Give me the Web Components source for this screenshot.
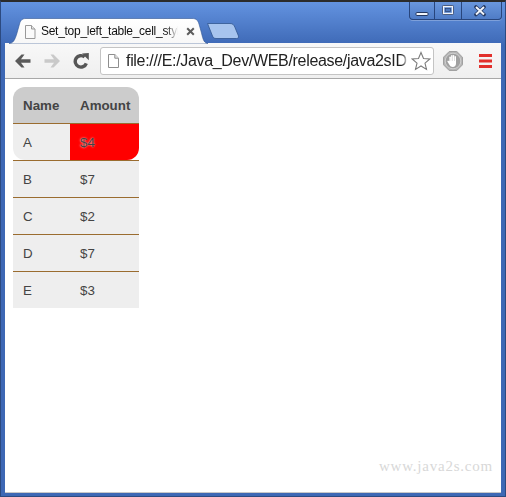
<!DOCTYPE html>
<html>
<head>
<meta charset="utf-8">
<title>Set_top_left_table_cell_style</title>
<style>
  html, body { margin: 0; padding: 0; height: 100%; overflow: hidden; background: #fff; }
  browser-window { height: 497px; }
</style>
</head>
<body>
<browser-window>
  <demo-table></demo-table>
  <site-mark slot="mark">www.java2s.com</site-mark>
</browser-window>

<script>
class WindowControls extends HTMLElement {
  constructor() {
    super();
    this.attachShadow({ mode: 'open' });
  }

  connectedCallback() {
    this.shadowRoot.innerHTML = `
      <style>
        :host {
          position: absolute;
          top: 0;
          right: 3px;
          display: flex;
          width: 93px;
          height: 18px;
          box-sizing: border-box;
          border: 1px solid #28457c;
          border-top: 0;
          border-radius: 0 0 4px 4px;
          background: linear-gradient(#6a97dd, #4f7cc6);
          box-shadow: 0 1px 0 rgba(255,255,255,.25);
        }
        div { display: flex; align-items: center; justify-content: center; border-left: 1px solid #28457c; }
        .min { border-left: 0; width: 24px; }
        .max { width: 26px; }
        .close { flex: 1; padding-right: 4px; }
      </style>
      <div class="min"><svg width="14" height="12" viewBox="0 0 14 12"><rect x="1" y="7.500" width="12" height="3" rx="1" fill="#f2f5fa" stroke="#24375f" stroke-width="1"/></svg></div>
      <div class="max"><svg width="12" height="12" viewBox="0 0 12 12"><rect x=".5" y=".5" width="11" height="9" rx="1" fill="none" stroke="#24375f" stroke-width="1"/><rect x="1.500" y="1.500" width="9" height="7" fill="none" stroke="#f2f5fa" stroke-width="1.400"/><rect x="3.500" y="3.500" width="5" height="3" fill="#4c78c0" stroke="#24375f" stroke-width=".6"/></svg></div>
      <div class="close"><svg width="14" height="12" viewBox="0 0 14 12"><path d="M3 2l8 7.500M11 2l-8 7.500" stroke="#24375f" stroke-width="3.600" stroke-linecap="round"/><path d="M3 2l8 7.500M11 2l-8 7.500" stroke="#f2f5fa" stroke-width="2"/></svg></div>
    `;
  }
}
customElements.define('window-controls', WindowControls);

class BrowserTab extends HTMLElement {
  constructor() {
    super();
    this.attachShadow({ mode: 'open' });
  }

  connectedCallback() {
    this.shadowRoot.innerHTML = `
      <style>
        :host {
          position: relative;
          display: flex;
          align-items: center;
          box-sizing: border-box;
          width: 199px;
          height: 25px;
          padding: 0 12px 0 32px;
          font: 12px "Liberation Sans", Arial, sans-serif;
          letter-spacing: -.28px;
          color: #111;
        }
        .shape { position: absolute; left: 0; top: 0; }
        .page { position: absolute; left: 15px; top: 7px; }
        .title { position: relative; width: 137px; white-space: nowrap; line-height: 16px;
          -webkit-mask-image: linear-gradient(90deg, #000 125px, transparent 137px);
          mask-image: linear-gradient(90deg, #000 125px, transparent 137px); }
        .close { position: absolute; left: 177px; top: 9px; }
      </style>
      <svg class="shape" width="199" height="26" viewBox="0 0 199 26">
        <path d="M0 25.500C4 25.500 6 22 8 15L10.500 6C11.600 2 13.500 .5 17 .5H183C187 .5 188.800 2 190 6L192.500 15C194 22 195.500 25.500 199 25.500V26H0Z" fill="url(#tabfill)" stroke="#2f5492" stroke-width=".6"/>
        <defs><linearGradient id="tabfill" x1="0" y1="0" x2="0" y2="1"><stop offset="0" stop-color="#fff"/><stop offset="1" stop-color="#f7f7f7"/></linearGradient></defs>
      </svg>
      <svg class="page" width="12" height="14" viewBox="0 0 12 14"><path d="M1.500 .5H7.500L11 4V13.500H1.500Z" fill="#fafafa" stroke="#999"/><path d="M7.500 .5V4H11" fill="#e4e4e4" stroke="#999"/></svg>
      <span class="title"><slot></slot></span>
      <svg class="close" width="9" height="9" viewBox="0 0 9 9"><path d="M1.200 1.200l6.600 6.600M7.800 1.200l-6.600 6.600" stroke="#5c5c5c" stroke-width="2"/></svg>
    `;
  }
}
customElements.define('browser-tab', BrowserTab);

class NewTabButton extends HTMLElement {
  constructor() {
    super();
    this.attachShadow({ mode: 'open' });
  }

  connectedCallback() {
    this.shadowRoot.innerHTML = `
      <style>:host { display: block; width: 34px; height: 16px; margin: 5px 0 0 -1px; } svg { display: block; }</style>
      <svg width="34" height="16" viewBox="0 0 34 16"><path d="M.5 .5H23C26 .5 27 2 28 4.500L31.500 13C32 14.500 31 15.500 29.500 15.500H9C7 15.500 6 14.500 5.500 13L1.500 3C1 1.500 .5 .5 .5 .5Z" fill="#a7c4ee" stroke="#30558f" stroke-width=".8"/></svg>
    `;
  }
}
customElements.define('new-tab-button', NewTabButton);

class BrowserToolbar extends HTMLElement {
  constructor() {
    super();
    this.attachShadow({ mode: 'open' });
  }

  connectedCallback() {
    this.shadowRoot.innerHTML = `
      <style>
        :host {
          display: flex;
          align-items: center;
          box-sizing: border-box;
          height: 36px;
          padding: 0 0 0 10px;
          background: linear-gradient(#f8f8f8, #efefef);
          border-bottom: 1px solid #a8a8a8;
          font: 16px "Liberation Sans", Arial, sans-serif;
          color: #222;
        }
        svg { display: block; flex: none; }
        .back { margin-right: 13px; }
        .fwd { margin-right: 13px; }
        .reload { margin-right: 11px; }
        .box {
          display: flex;
          align-items: center;
          box-sizing: border-box;
          width: 334px;
          height: 28px;
          padding: 0 3px 0 7px;
          background: #fff;
          border: 1px solid #c4c4c4;
          border-radius: 3px;
          flex: none;
        }
        .url {
          flex: none;
          width: 282px;
          margin-left: 7px;
          margin-right: 3px;
          white-space: nowrap;
          line-height: 20px;
          letter-spacing: -.32px;
          -webkit-mask-image: linear-gradient(90deg, #000 276px, transparent 282px);
          mask-image: linear-gradient(90deg, #000 276px, transparent 282px);
        }
        .stop { margin-left: 9px; }
        .menu { margin-left: 16px; }
      </style>
      <svg class="back" width="16" height="14" viewBox="0 0 16 14"><path d="M0 7L6.500 .5H9.500L6 5.300H15.500V8.700H6L9.500 13.500H6.500Z" fill="#5a5a5a"/></svg>
      <svg class="fwd" width="16" height="14" viewBox="0 0 16 14"><path d="M16 7L9.500 .5H6.500L10 5.300H.5V8.700H10L6.500 13.500H9.500Z" fill="#c9c9c9"/></svg>
      <svg class="reload" width="16" height="16" viewBox="0 0 16 16"><path d="M13.300 10.300A5.700 5.700 0 1 1 11.600 4" fill="none" stroke="#565656" stroke-width="3.400"/><path d="M9 .5L15.800 0V7.200Z" fill="#565656"/></svg>
      <div class="box">
        <svg width="11" height="14" viewBox="0 0 11 14"><path d="M.5 .5H6.800L10.500 4.200V13.500H.5Z" fill="#fff" stroke="#8e8e8e"/><path d="M6.800 .5V4.200H10.500" fill="#e8e8e8" stroke="#8e8e8e"/></svg>
        <span class="url"><slot></slot></span>
        <svg width="20" height="20" viewBox="0 0 20 20"><path d="M10 1.500L12.500 7.500L18.800 8L14 12.100L15.500 18.400L10 15L4.500 18.400L6 12.100L1.200 8L7.500 7.500Z" fill="#fff" stroke="#7c7c7c" stroke-width="1.100"/></svg>
      </div>
      <svg class="stop" width="20" height="20" viewBox="0 0 20 20">
        <path d="M6.200 .5H13.800L19.500 6.200V13.800L13.800 19.500H6.200L.5 13.800V6.200Z" fill="#b4b4b4" stroke="#a0a0a0"/>
        <circle cx="10" cy="10" r="7.800" fill="#a0a0a0" stroke="#cfcfcf"/>
        <g fill="#fff">
          <rect x="6.400" y="5.500" width="1.500" height="7" rx=".75"/>
          <rect x="8.100" y="4" width="1.500" height="7" rx=".75"/>
          <rect x="9.800" y="4" width="1.500" height="7" rx=".75"/>
          <rect x="11.500" y="5" width="1.500" height="7" rx=".75"/>
          <path d="M6.400 10H13V12.500C13 14.800 11.700 16 9.800 16C8.200 16 7.200 15 6.400 13.700L4.500 10.800C4 10 5.100 9.200 5.800 9.900L6.400 10.500Z"/>
        </g>
      </svg>
      <svg class="menu" width="13" height="14" viewBox="0 0 13 14"><path d="M0 0H13V3H0ZM0 5.500H13V8.500H0ZM0 11H13V14H0Z" fill="#e2302c"/></svg>
    `;
  }
}
customElements.define('browser-toolbar', BrowserToolbar);

class BrowserWindow extends HTMLElement {
  constructor() {
    super();
    this.attachShadow({ mode: 'open' });
  }

  connectedCallback() {
    this.shadowRoot.innerHTML = `
      <style>
        :host {
          position: relative;
          display: flex;
          flex-direction: column;
          box-sizing: border-box;
          width: 506px;
          border-top: 2px solid #2b2b2b;
          background: linear-gradient(#6393e0 0, #3d68b5 44px, #3d68b5 100%);
          padding: 0 4px 3px 4px;
          border-left: 1px solid #2c4a80;
          border-right: 1px solid #2c4a80;
          border-bottom: 1px solid #2c4a80;
          overflow: hidden;
        }
        .tabs { display: flex; align-items: flex-start; height: 25px; margin-top: 16px; padding-left: 4px; }
        .page {
          position: relative;
          flex: 1;
          padding: 8px 0 0 8px;
          background: #fff;
          border-bottom: 1px solid #c8c8c8;
        }
        .mark { position: absolute; right: 8px; bottom: 17px; }
      </style>
      <window-controls></window-controls>
      <div class="tabs">
        <browser-tab>Set_top_left_table_cell_styl</browser-tab>
        <new-tab-button></new-tab-button>
      </div>
      <browser-toolbar>file:///E:/Java_Dev/WEB/release/java2sID</browser-toolbar>
      <div class="page">
        <slot></slot>
        <div class="mark"><slot name="mark"></slot></div>
      </div>
    `;
  }
}
customElements.define('browser-window', BrowserWindow);

class SiteMark extends HTMLElement {
  constructor() {
    super();
    this.attachShadow({ mode: 'open' });
  }

  connectedCallback() {
    this.shadowRoot.innerHTML = `
      <style>
        :host { display: block; font: 15px "Liberation Serif", "Times New Roman", serif; color: #d8d8d8; letter-spacing: .78px; }
      </style>
      <slot></slot>
    `;
  }
}
customElements.define('site-mark', SiteMark);

class DemoTable extends HTMLElement {
  constructor() {
    super();
    this.attachShadow({ mode: 'open' });
  }

  connectedCallback() {
    const rows = [['A', '$4'], ['B', '$7'], ['C', '$2'], ['D', '$7'], ['E', '$3']];
    this.shadowRoot.innerHTML = `
      <style>
        :host { display: block; width: 126px; font: 13.33px "Liberation Sans", Arial, sans-serif; color: #444; }
        table { width: 126px; border-collapse: separate; border-spacing: 0; table-layout: fixed; font: inherit; color: inherit; }
        th, td { box-sizing: border-box; height: 37px; padding: 0 0 0 10px; text-align: left; background: #eee; border-top: 1px solid #9a6c2f; }
        th { height: 36px; background: #ccc; border-top: 0; font-weight: bold; }
        th:first-child { width: 57px; border-top-left-radius: 12px; }
        th:last-child { border-top-right-radius: 12px; }
        tbody tr:first-child td:first-child { border-bottom-left-radius: 12px; }
        tbody tr:first-child td:last-child { border-bottom-right-radius: 12px; background: #f00; text-shadow: 0 0 2px rgba(255,255,255,.9); }
      </style>
      <table>
        <thead><tr><th>Name</th><th>Amount</th></tr></thead>
        <tbody>${rows.map(r => `<tr><td>${r[0]}</td><td>${r[1]}</td></tr>`).join('')}</tbody>
      </table>
    `;
  }
}
customElements.define('demo-table', DemoTable);
</script>
</body>
</html>
